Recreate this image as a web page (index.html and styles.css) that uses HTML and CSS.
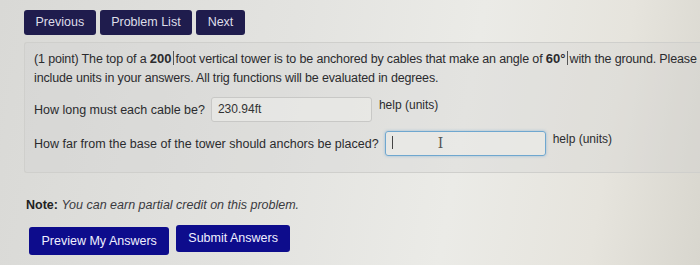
FILE: index.html
```html
<!DOCTYPE html>
<html>
<head>
<meta charset="utf-8">
<link rel="stylesheet" href="styles.css">
</head>
<body>
<div class="page">
  <div class="nav">
    <a class="navbtn">Previous</a>
    <a class="navbtn">Problem List</a>
    <a class="navbtn">Next</a>
  </div>
  <div class="problem">
    <p class="stmt">(1 point) The top of a <span class="math">200</span><span class="bar"></span>foot vertical tower is to be anchored by cables that make an angle of <span class="math">60°</span><span class="bar"></span>with the ground. Please include units in your answers. All trig functions will be evaluated in degrees.</p>
    <div class="qrow q1">
      <span class="qtext">How long must each cable be?</span>
      <span class="field">230.94ft</span>
      <span class="help">help (units)</span>
    </div>
    <div class="qrow q2">
      <span class="qtext">How far from the base of the tower should anchors be placed?</span>
      <span class="field focus"><span class="caret"></span><span class="ibeam">I</span></span>
      <span class="help">help (units)</span>
    </div>
  </div>
  <p class="note"><b>Note:</b> <i>You can earn partial credit on this problem.</i></p>
  <div class="actions">
    <a class="actbtn preview">Preview My Answers</a>
    <a class="actbtn submit">Submit Answers</a>
  </div>
</div>
</body>
</html>
```
FILE: styles.css
```css
html, body {
  margin: 0;
  padding: 0;
}
body {
  width: 700px;
  height: 265px;
  overflow: hidden;
  background: linear-gradient(100deg, #d9d9d6 0%, #e3e3e0 40%, #ebebe7 65%, #e6e4dd 85%, #d8d6ce 100%);
  font-family: "Liberation Sans", Arial, sans-serif;
  color: #2b2b2e;
}
.page {
  padding: 10px 0 0 24px;
}
.nav {
  display: flex;
  gap: 4px;
}
.navbtn {
  display: block;
  background: #1f1c4d;
  color: #dedee9;
  font-size: 12.5px;
  line-height: 25px;
  height: 25px;
  padding: 0 11.5px;
  border-radius: 3px;
}
.problem {
  margin-top: 7px;
  width: 690px;
  border: 1px solid #cfcfcc;
  border-right: none;
  border-radius: 3px 0 0 3px;
  background: rgba(210, 210, 207, 0.3);
  padding: 6px 0 0 9px;
  height: 131px;
  box-sizing: border-box;
}
.stmt {
  margin: 0;
  font-size: 12.5px;
  letter-spacing: -0.15px;
  line-height: 19px;
  width: 690px;
}
.math {
  font-weight: bold;
  font-size: 13px;
  letter-spacing: 0;
}
.bar {
  display: inline-block;
  width: 1px;
  height: 14px;
  background: #555;
  vertical-align: -2px;
  margin: 0 2px 0 1px;
}
.qrow {
  display: flex;
  align-items: center;
  font-size: 12.5px;
}
.q1 { margin-top: 9px; }
.q2 { margin-top: 9px; }
.field {
  display: block;
  box-sizing: border-box;
  width: 161px;
  height: 25px;
  line-height: 23px;
  border: 1px solid #c8c8c6;
  border-radius: 3px;
  background: rgba(236, 236, 234, 0.6);
  padding: 0 6px;
  font-size: 12px;
  color: #333;
  margin-left: 6px;
}
.field.focus {
  position: relative;
  border: 1.5px solid #6fa7cf;
  box-shadow: 0 0 3px rgba(102, 160, 210, 0.6);
  margin-left: 6px;
}
.caret {
  display: inline-block;
  width: 1px;
  height: 13px;
  background: #444;
  vertical-align: -2px;
}
.ibeam {
  position: absolute;
  left: 52px;
  top: 0;
  font-family: "DejaVu Serif", serif;
  font-size: 14px;
  color: #555;
}
.help {
  margin-left: 7px;
  font-size: 12px;
  align-self: flex-start;
  margin-top: 1px;
}
.note {
  margin: 25px 0 0 2px;
  font-size: 12.5px;
}
.note b { color: #222; }
.note i { color: #3a3a3e; }
.actions {
  display: flex;
  gap: 7px;
  align-items: flex-start;
  margin: 13px 0 0 5px;
}
.actbtn {
  display: block;
  background: #0d0c8c;
  color: #f0f0ff;
  font-size: 12.5px;
  border-radius: 3px;
  padding: 0 12.5px;
}
.preview { height: 28px; line-height: 28px; margin-top: 2px; }
.submit { height: 27px; line-height: 27px; padding: 0 12px; }
```
